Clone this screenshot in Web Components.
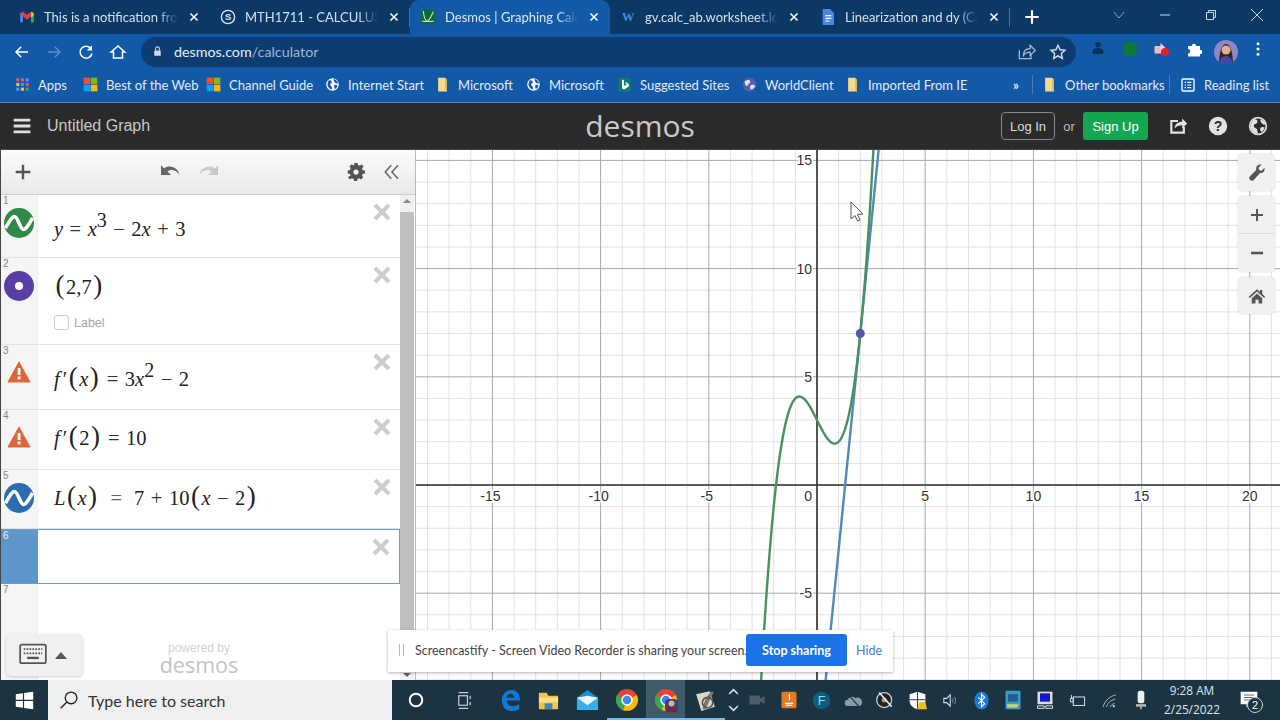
<!DOCTYPE html>
<html>
<head>
<meta charset="utf-8">
<title>Desmos</title>
<style>
  html, body { margin: 0; height: 100%; }
  body { width: 1280px; height: 720px; overflow: hidden; display: flex; flex-direction: column; font-family: "Liberation Sans", sans-serif; background: #fff; }
</style>
</head>
<body>
<chrome-tabs>
  <chrome-tab icon="gmail" style="width:202px;padding-left:11px">This is a notification from Gmail</chrome-tab>
  <chrome-tab icon="schoology" sep>MTH1711 - CALCULUS: 1 | Schoology</chrome-tab>
  <chrome-tab icon="desmos" active>Desmos | Graphing Calculator</chrome-tab>
  <chrome-tab icon="weebly">gv.calc_ab.worksheet.local</chrome-tab>
  <chrome-tab icon="docs" sep>Linearization and dy (Calc AB)</chrome-tab>
</chrome-tabs>
<chrome-toolbar></chrome-toolbar>
<bookmark-bar></bookmark-bar>
<desmos-header></desmos-header>
<calc-main>
  <expr-panel slot="panel">
    <expr-row n="1" kind="wave" color="#2f8a45" h="63"><math-line top="23"><i>y</i><u>=</u><i>x</i><sup>3</sup><u>−</u>2<i>x</i><u>+</u>3</math-line></expr-row>
    <expr-row n="2" kind="point" color="#5a3ea6" h="87" label><math-line top="18"><b>(</b>2,7<b>)</b></math-line></expr-row>
    <expr-row n="3" kind="warn" h="65"><math-line top="23"><i>f</i><em>′</em><b>(</b><i>x</i><b>)</b><u>=</u>3<i>x</i><sup>2</sup><u>−</u>2</math-line></expr-row>
    <expr-row n="4" kind="warn" h="60"><math-line top="17"><i>f</i><em>′</em><b>(</b>2<b>)</b><u>=</u>10</math-line></expr-row>
    <expr-row n="5" kind="wave" color="#2a6eb0" h="59"><math-line top="17"><i>L</i><b>(</b><i>x</i><b>)</b><u class="w">=</u>7<u>+</u>10<b>(</b><i>x</i><u>−</u>2<b>)</b></math-line></expr-row>
    <expr-row n="6" active h="55"></expr-row>
    <expr-row n="7" h="97" last></expr-row>
  </expr-panel>
  <graph-view slot="graph"></graph-view>
  <share-notice slot="notice"></share-notice>
</calc-main>
<win-taskbar></win-taskbar>

<script>
// every icon in one table, drawn on a 24 box unless it says otherwise
const ICONS = {
  gmail: '<path d="M2 6v14h4V11l6 5 6-5v9h4V6l-4-2-6 5-6-5z" fill="#ea4335"/><path d="M2 6v14h4V10z" fill="#4285f4"/><path d="M22 6v14h-4V10z" fill="#34a853"/><path d="M18 4l4 2v4l-4 3z" fill="#fbbc04"/>',
  schoology: '<circle cx="12" cy="12" r="10" fill="none" stroke="#dfe6ee" stroke-width="2"/><text x="12" y="17" font-size="14" font-weight="700" text-anchor="middle" font-family="Liberation Sans" fill="#dfe6ee">S</text>',
  desmos: '<rect x="1" y="1" width="22" height="22" rx="3" fill="#0d6b3a"/><path d="M5 3c1 10 3 15 6 15s6-8 9-14M3 18c4 1 14 1 18 0" fill="none" stroke="#cfe8cf" stroke-width="1.6"/>',
  weebly: '<text x="12" y="18" font-size="19" font-weight="700" text-anchor="middle" font-family="Liberation Serif" fill="#3f8fe0">W</text>',
  docs: '<path d="M4 0h11l6 6v18H4z" fill="#4a86e8"/><path d="M8 10h9M8 14h9M8 18h6" stroke="#fff" stroke-width="1.8"/>',
  close: '<path d="M6 6l12 12M18 6L6 18" stroke="currentColor" stroke-width="2.6" fill="none"/>',
  plus: '<path d="M12 4v16M4 12h16" stroke="currentColor" stroke-width="2.6" fill="none"/>',
  back: '<path d="M20 12H5M11 5l-7 7 7 7" stroke="currentColor" stroke-width="2" fill="none"/>',
  forward: '<path d="M4 12h15M13 5l7 7-7 7" stroke="currentColor" stroke-width="2" fill="none"/>',
  reload: '<path d="M19 8a8 8 0 1 0 1 6" stroke="currentColor" stroke-width="2" fill="none"/><path d="M20 3v7h-7z" fill="currentColor"/>',
  home: '<path d="M12 4L3 12h3v8h12v-8h3z" stroke="currentColor" stroke-width="2" fill="none"/>',
  lock: '<rect x="6" y="10" width="12" height="10" rx="1" fill="currentColor"/><path d="M8.5 10V7a3.5 3.5 0 0 1 7 0v3" stroke="currentColor" stroke-width="2" fill="none"/>',
  share: '<path d="M4 10v10h14v-5" stroke="currentColor" stroke-width="1.5" fill="none"/><path d="M9 16c0-6 4-8 8-8V4l6 6-6 6v-4c-4 0-6 1-8 4z" stroke="currentColor" stroke-width="1.5" fill="none"/>',
  star: '<path d="M12 3l2.8 6 6.5.7-4.9 4.4 1.4 6.4L12 17.2l-5.8 3.3 1.4-6.4L2.700 9.700 9.200 9z" stroke="currentColor" stroke-width="1.8" fill="none"/>',
  person: '<circle cx="12" cy="7" r="4" fill="#0b2f5c"/><path d="M4 21v-4c0-3 3-5 8-5s8 2 8 5v4z" fill="#0b2f5c"/>',
  greenext: '<rect x="3" y="3" width="18" height="18" rx="3" fill="#0e7a3a"/>',
  redext: '<path d="M2 8h12v10H2z" fill="#f4b8c2"/><path d="M10 4l8 8-8 6z" fill="#f4d6dc"/><circle cx="16" cy="16" r="5.500" fill="#e0202a"/>',
  puzzle: '<path d="M4 8h5a3 3 0 0 1 6 0h5v5a3 3 0 0 1 0 6v3H4v-4a3 3 0 0 0 0-6z" fill="#fff"/>',
  avatar: '<circle cx="12" cy="12" r="12" fill="#8e86c8"/><path d="M5 24c0-9 2-20 7-20s7 11 7 20z" fill="#3a2420"/><circle cx="12" cy="10" r="4.500" fill="#e0b090"/><path d="M5 24c1-6 4-8 7-8s6 2 7 8z" fill="#3b4ba8"/>',
  dots: '<circle cx="12" cy="5" r="2" fill="#fff"/><circle cx="12" cy="12" r="2" fill="#fff"/><circle cx="12" cy="19" r="2" fill="#fff"/>',
  apps: '<g fill="#e8a33d"><rect x="2" y="2" width="5" height="5" fill="#e85d4a"/><rect x="9.500" y="2" width="5" height="5" fill="#e85d4a"/><rect x="17" y="2" width="5" height="5" fill="#4a9cf0"/><rect x="2" y="9.500" width="5" height="5" fill="#f0c040"/><rect x="9.500" y="9.500" width="5" height="5" fill="#43a85a"/><rect x="17" y="9.500" width="5" height="5" fill="#e85d4a"/><rect x="2" y="17" width="5" height="5" fill="#4a9cf0"/><rect x="9.500" y="17" width="5" height="5" fill="#f0c040"/><rect x="17" y="17" width="5" height="5" fill="#43a85a"/></g>',
  ms: '<rect x="1" y="1" width="10.500" height="10.500" fill="#f25022"/><rect x="12.500" y="1" width="10.500" height="10.500" fill="#7fba00"/><rect x="1" y="12.500" width="10.500" height="10.500" fill="#00a4ef"/><rect x="12.500" y="12.500" width="10.500" height="10.500" fill="#ffb900"/>',
  globe: '<circle cx="12" cy="12" r="10" fill="#fff"/><path d="M6 5c3 0 5 1 5 3s-3 2-3 4 3 2 3 5 1 3 1 3c-3 0-7-3-8-7 0-3 1-6 2-8zM14 3c3 1 6 3 7 7-2 1-4 0-5-1s-3-4-2-6zM15 13c2-1 4 0 5 1-1 3-2 4-4 5-1-2-2-4-1-6z" fill="#1259a8"/>',
  folder: '<path d="M5 1h11l3 3v19H5z" fill="#f6d98a"/><path d="M16 1l3 3v19h-2z" fill="#d9b45c"/>',
  bing: '<rect x="2" y="1" width="20" height="22" rx="2" fill="#0e7a72"/><path d="M8 4l3 1v9l5-2-2-1-1-3 6 3v4l-8 5-3-2z" fill="#fff"/>',
  world: '<circle cx="12" cy="12" r="11" fill="#565fa8"/><path d="M4 8c3-4 8-4 9-1s-3 3-4 6-4 1-5-5zM14 13c3-1 6 0 7 1-1 4-4 6-6 6s-3-5-1-7z" fill="#dfe2f2"/>',
  reading: '<rect x="3" y="3" width="18" height="18" rx="1.500" stroke="#fff" stroke-width="2" fill="none"/><path d="M7 8h2M11 8h6M7 12h2M11 12h6M7 16h2M11 16h6" stroke="#fff" stroke-width="1.800"/>',
  menu: '<path d="M2 5h20M2 12h20M2 19h20" stroke="currentColor" stroke-width="3.400" fill="none"/>',
  boxshare: '<path d="M19 13v7H4V6h8" stroke="currentColor" stroke-width="2.600" fill="none"/><path d="M8 15c0-5 4-8 9-8V3l6 6-6 6v-4c-4 0-7 1-9 4z" fill="currentColor"/>',
  help: '<circle cx="12" cy="12" r="11" fill="currentColor"/><text x="12" y="18" font-size="17" font-weight="700" text-anchor="middle" font-family="Liberation Sans" fill="#2a2a2a">?</text>',
  earth: '<circle cx="12" cy="12" r="10" fill="none" stroke="currentColor" stroke-width="2"/><path d="M7 4c4 0 5 2 4 4s-4 1-4 4 4 2 4 5l1 4c-4 0-8-3-9-8 0-4 2-7 4-9zM15 4c3 1 5 3 6 6-2 1-3 0-4-1s-3-3-2-5zM15 14c2-1 4-1 5 0-1 2-2 4-4 5-1-1-2-3-1-5z" fill="currentColor"/>',
  undo: '<path d="M2 5v10h10l-3.500-3.500c3-2.500 8-2 12 3-1.500-7-10-10.500-15.500-6z" fill="currentColor"/>',
  redo: '<path d="M22 5v10H12l3.500-3.500c-3-2.500-8-2-12 3 1.500-7 10-10.500 15.500-6z" fill="currentColor"/>',
  gear: '<path d="M10 1h4l.6 3 2.200 1 2.600-1.600 2.800 2.800L20 8.800l.9 2.200 3 .6v4l-3 .6-.9 1.800 1.600 2.600-2.800 2.800-2.600-1.600-2.200.9-.6 3h-4l-.6-3-2.200-.9-2.600 1.600-2.800-2.800L4.800 18 4 16l-3-.6v-4l3-.6.9-2.200L3.300 6l2.800-2.800L8.700 4.800l.7-.8z" transform="translate(0 -1.500)" fill="currentColor"/><circle cx="12" cy="12" r="3.500" fill="#f2f2f2"/>',
  collapse: '<path d="M11 3l-8 9 8 9M20 3l-8 9 8 9" stroke="currentColor" stroke-width="2" fill="none"/>',
  wrench: '<path d="M22 5l-4 4-3-1-1-3 4-4c-4-1-8 2-7 7L2 17c-1 2 0 4 2 5 1 1 3 0 4-1l8-9c4 1 7-3 6-7z" fill="currentColor"/>',
  minus: '<path d="M4 12h16" stroke="currentColor" stroke-width="3.400" fill="none"/>',
  house: '<path d="M12 3L1 13l1.500 1.500L12 6l9.500 8.500L23 13l-4-3.600V4h-3v2.700z" fill="currentColor"/><path d="M5 15l7-6.500 7 6.500v7h-5v-5h-4v5H5z" fill="currentColor"/>',
  keyboard: '<rect x="1" y="3" width="22" height="16" rx="1.500" fill="#f2f2f2" stroke="#555" stroke-width="1.500"/><path d="M4 7h16M4 10.500h16" stroke="#555" stroke-width="1.500" stroke-dasharray="1.500 1"/><path d="M7 14.500h10" stroke="#555" stroke-width="2"/>',
  windows: '<path d="M1 4l9-1.300V11H1zM11.500 2.500L23 1v10H11.500zM1 12.500h9v8.800L1 20zM11.500 12.500H23V23l-11.500-1.600z" fill="#fff"/>',
  search: '<circle cx="14.500" cy="9.500" r="7" fill="none" stroke="#222" stroke-width="1.600"/><path d="M9.500 14.500L2 22" stroke="#222" stroke-width="1.600"/>',
  cortana: '<circle cx="12" cy="12" r="7.500" fill="none" stroke="#fff" stroke-width="2.400"/>',
  taskview: '<path d="M6 2h12M6 22h12" stroke="#ccd" stroke-width="1.500"/><rect x="6" y="6" width="11" height="12" fill="none" stroke="#ccd" stroke-width="1.500"/><path d="M20.500 6v4M20.500 14v4" stroke="#ccd" stroke-width="1.500"/>',
  edge: '<path d="M3 12C3 5 8 1 13 1c6 0 9 5 9 11H8c0 4 3 6 6 6 3 0 5-1 7-2v5c-2 1-4 2-8 2-6 0-10-5-10-11zM8 9h8c0-2-2-4-4-4S8 7 8 9z" fill="#1078d8"/>',
  explorer: '<path d="M2 4h8l2 3h10v14H2z" fill="#f2c24a"/><rect x="2" y="9" width="20" height="5" fill="#fce08a"/><rect x="8" y="15" width="8" height="6" fill="#3f86b8"/>',
  mail: '<path d="M1 9l11-8 11 8v13H1z" fill="#1491d8"/><path d="M1 9l11 8 11-8v13H1z" fill="#35b0ea"/><path d="M1 9l11 8 11-8-11-2z" fill="#e8f5fc"/>',
  chrome: '<circle cx="12" cy="12" r="11" fill="#ea4335"/><path d="M12 12L2 7a11 11 0 0 0 6 15z" fill="#34a853"/><path d="M12 12l-4 10a11 11 0 0 0 15-10c0-2-1-4-1-5z" fill="#fbbc04"/><circle cx="12" cy="12" r="5" fill="#4285f4" stroke="#fff" stroke-width="1.500"/>',
  chromeface: '<circle cx="12" cy="12" r="11" fill="#ea4335"/><path d="M12 12L2 7a11 11 0 0 0 6 15z" fill="#34a853"/><path d="M12 12l-4 10a11 11 0 0 0 15-10c0-2-1-4-1-5z" fill="#fbbc04"/><circle cx="12" cy="12" r="5" fill="#4285f4" stroke="#fff" stroke-width="1.500"/><rect x="11" y="11" width="13" height="13" rx="4" fill="#3b3f88"/><circle cx="17.500" cy="15.500" r="3" fill="#e0b090"/><path d="M12 24c1-3 3-5 5.500-5s4.500 2 5.500 5z" fill="#8a2030"/>',
  stickies: '<path d="M3 6l13-3 5 15-13 4z" fill="#dcd8c8"/><path d="M9 20c2-8 5-14 9-17l2 1c-3 5-5 10-8 17z" fill="#777"/><circle cx="14" cy="14" r="5" fill="none" stroke="#555" stroke-width="1.500"/>',
  chevup: '<path d="M5 16l7-7 7 7" stroke="#dde" stroke-width="2.400" fill="none"/>',
  chevdown: '<path d="M5 8l7 7 7-7" stroke="#dde" stroke-width="2.400" fill="none"/>',
  camera: '<rect x="2" y="6" width="14" height="12" fill="#4f5c63"/><path d="M16 10l6-3v10l-6-3z" fill="#4f5c63"/>',
  java: '<rect x="3" y="2" width="18" height="20" rx="2" fill="#e07b26"/><path d="M7 16h10M8 18.500h8M13 5c-3 3 2 4-1 7" stroke="#fff" stroke-width="1.400" fill="none"/>',
  fcircle: '<circle cx="12" cy="12" r="11" fill="#0c5f7c"/><text x="12" y="18" font-size="16" text-anchor="middle" font-family="Liberation Sans" fill="#9ad8f0">F</text>',
  cloudoff: '<path d="M5 19a4 4 0 0 1 0-8c1-4 7-5 9-2a5 5 0 0 1 6 10z" fill="#8b9ba3"/><path d="M5 4l15 17" stroke="#1c3340" stroke-width="1.500"/>',
  speaker: '<circle cx="11" cy="12" r="9" fill="#222" stroke="#ccc" stroke-width="1.500"/><circle cx="11" cy="12" r="3" fill="#999"/><path d="M5 3l15 17" stroke="#e8e8e8" stroke-width="2"/>',
  shield: '<path d="M12 1l10 3v8c0 6-5 10-10 11C7 22 2 18 2 12V4z" fill="#fff"/><path d="M12 1v22M2 11h20" stroke="#333" stroke-width="1.200"/><path d="M14 14h8l2 9H12z" fill="#e8c020"/>',
  volume: '<path d="M4 9h4l5-5v16l-5-5H4z" fill="none" stroke="#dde" stroke-width="1.500"/><path d="M16 9c1 2 1 4 0 6M19 7c2 3 2 7 0 10" stroke="#8a9aa2" stroke-width="1.300" fill="none"/>',
  bluetooth: '<ellipse cx="12" cy="12" rx="9" ry="11.500" fill="#1a78d8"/><path d="M8 8l8 8-4 4V4l4 4-8 8" stroke="#fff" stroke-width="1.500" fill="none"/>',
  appblue: '<rect x="3" y="1" width="18" height="22" rx="1" fill="#3a9cc8"/><path d="M6 5h12v9H6z" fill="#1d5f8c"/><path d="M5 17h14l-2 4H5z" fill="#c8d860"/>',
  monitor: '<rect x="3" y="2" width="18" height="15" fill="#ddd"/><rect x="6" y="4" width="12" height="10" fill="#1418c8"/><path d="M3 19h8v3H3zM13 19h8v3h-8z" fill="none" stroke="#ddd" stroke-width="1.200"/>',
  battery: '<rect x="6" y="7" width="16" height="12" fill="none" stroke="#dde" stroke-width="1.400"/><path d="M2 9h4v5H2zM3.500 4v5" stroke="#dde" stroke-width="1.400" fill="none"/>',
  wifi: '<path d="M3 21c2-8 9-15 18-17M8 21c1-5 5-9 12-11M13 21c1-2 3-4 6-5" stroke="#b8c4ca" stroke-width="1.300" fill="none"/><circle cx="18" cy="20" r="1.500" fill="#dde"/>',
  mic: '<rect x="8" y="1" width="8" height="15" rx="3" fill="#eee"/><path d="M6 17h12v3H6z" fill="#bbb"/><rect x="11" y="20" width="2" height="3" fill="#bbb"/>',
  notify: '<path d="M2 2h20v15h-9l-4 4v-4H2z" fill="#fff"/><path d="M6 6h12M6 9h12M6 12h8" stroke="#667" stroke-width="1.300"/>'
};

function icon(name, size, extra) {
  return `<svg width="${size}" height="${size}" viewBox="0 0 24 24" style="display:block;flex:none;${extra || ''}">${ICONS[name]}</svg>`;
}

class BaseEl extends HTMLElement {
  constructor() {
    super();
    this.attachShadow({ mode: 'open' });
  }
}

class ChromeTabs extends BaseEl {
  connectedCallback() {
    this.shadowRoot.innerHTML = `<style>
      :host { display: flex; height: 34px; flex: none; background: #0c3866; padding-left: 8px; color: #fff; align-items: stretch; }
      .new { width: 44px; display: flex; align-items: center; justify-content: center; margin-left: 0; }
      .win { margin-left: auto; display: flex; align-items: flex-start; padding-right: 0; }
      .win div { width: 46px; height: 30px; display: flex; align-items: center; justify-content: center; color: #cfd9e6; }
    </style>
    <slot></slot>
    <div class="new">${icon('plus', 20)}</div>
    <div class="win">
      <div><svg width="12" height="12" viewBox="0 0 12 12"><path d="M1 3l5 6 5-6" stroke="#8fa6c2" fill="none"/></svg></div>
      <div><svg width="12" height="12" viewBox="0 0 12 12"><path d="M1 6h10" stroke="#cfd9e6"/></svg></div>
      <div><svg width="12" height="12" viewBox="0 0 12 12"><path d="M1.500 3.500h7v7h-7zM3.500 3V1.500h7v7H9" stroke="#cfd9e6" fill="none"/></svg></div>
      <div><svg width="14" height="14" viewBox="0 0 14 14"><path d="M1 1l12 12M13 1L1 13" stroke="#cfd9e6" fill="none"/></svg></div>
    </div>`;
  }
}

class ChromeTab extends BaseEl {
  connectedCallback() {
    const active = this.hasAttribute('active');
    this.shadowRoot.innerHTML = `<style>
      :host { display: flex; width: 200px; align-items: center; box-sizing: border-box; padding: 0 9px 0 10px; gap: 9px; position: relative; font: 13px Lato, "Liberation Sans", sans-serif; color: ${active ? '#dbe8f6' : '#d6e0ec'}; background: ${active ? '#1259a8' : 'transparent'}; border-radius: ${active ? '9px 9px 0 0' : '0'}; height: 34px; }
      .t { flex: 1; min-width: 0; white-space: nowrap; overflow: hidden; -webkit-mask-image: linear-gradient(90deg, #000 85%, transparent); mask-image: linear-gradient(90deg, #000 85%, transparent); }
      .x { color: #fff; flex: none; }
      :host([sep])::after { content: ""; position: absolute; right: 0; top: 8px; height: 19px; width: 1px; background: #4c6f96; }
    </style>
    ${icon(this.getAttribute('icon'), 16)}
    <div class="t"><slot></slot></div>
    <div class="x">${icon('close', 14)}</div>`;
  }
}

class ChromeToolbar extends BaseEl {
  connectedCallback() {
    const nav = (n, c) => `<div class="b" style="color:${c}">${icon(n, 18)}</div>`;
    const ext = (n, s) => `<div class="e">${icon(n, s)}</div>`;
    this.shadowRoot.innerHTML = `<style>
      :host { display: flex; height: 35px; flex: none; background: #1259a8; align-items: center; padding-left: 6px; color: #fff; }
      .b { width: 32px; display: flex; justify-content: center; }
      .omni { width: 935px; margin-left: 7px; height: 30px; border-radius: 15px; background: #0d3c70; display: flex; align-items: center; box-sizing: border-box; padding-left: 10px; font: 14.300px Lato, "Liberation Sans", sans-serif; color: #9db6d2; }
      .omni b { font-weight: 400; color: #e6eef7; }
      .lock { color: #cfdbe8; margin-right: 10px; }
      .end { margin-left: auto; display: flex; gap: 13px; align-items: center; color: #a8bdd6; padding-right: 9px; }
      .e { width: 32px; display: flex; justify-content: center; }
      .exts { display: flex; margin-left: 6px; }
    </style>
    ${nav('back', '#fff')}${nav('forward', '#5d8ec6')}${nav('reload', '#fff')}${nav('home', '#fff')}
    <div class="omni">
      <span class="lock">${icon('lock', 13)}</span><span><b>desmos.com</b>/calculator</span>
      <div class="end">${icon('share', 20)}<span style="color:#dbe6f2">${icon('star', 18)}</span></div>
    </div>
    <div class="exts">${ext('person', 16)}${ext('greenext', 18)}${ext('redext', 18)}${ext('puzzle', 18)}${ext('avatar', 24)}${ext('dots', 18)}</div>`;
  }
}

class BookmarkBar extends BaseEl {
  connectedCallback() {
    const items = [
      ['apps', 'Apps', 68], ['ms', 'Best of the Web', 123], ['ms', 'Channel Guide', 119],
      ['globe', 'Internet Start', 110], ['folder', 'Microsoft', 91], ['globe', 'Microsoft', 91],
      ['bing', 'Suggested Sites', 125], ['world', 'WorldClient', 103], ['folder', 'Imported From IE', 163]
    ];
    const row = items.map(([i, t, w]) => `<div class="i" style="width:${w}px">${icon(i, 15)}<span>${t}</span></div>`).join('');
    this.shadowRoot.innerHTML = `<style>
      :host { display: flex; height: 34px; flex: none; background: #1259a8; border-bottom: 1px solid #5d86b4; box-sizing: border-box; align-items: center; padding: 0 0 2px 15px; font: 13px Lato, "Liberation Sans", sans-serif; color: #e3ebf5; }
      .i { display: flex; align-items: center; gap: 8px; white-space: nowrap; flex: none; box-sizing: border-box; }
      .more { width: 15px; font-size: 13px; font-weight: 700; margin-left: 5px; }
      .s { width: 1px; height: 19px; background: #4c7cb2; flex: none; margin: 0 9px 0 4px; }
    </style>
    ${row}
    <span class="more">»</span><span class="s"></span>
    <div class="i" style="width:127px">${icon('folder', 15)}<span>Other bookmarks</span></div>
    <span class="s" style="margin:0 10px 0 0"></span>
    <div class="i">${icon('reading', 16)}<span>Reading list</span></div>`;
  }
}

class DesmosHeader extends BaseEl {
  connectedCallback() {
    this.shadowRoot.innerHTML = `<style>
      :host { display: grid; grid-template-columns: 1fr auto 1fr; height: 47px; flex: none; background: #2a2a2a; align-items: center; color: #ddd; font-size: 16px; border-bottom: 1px solid #444; box-sizing: border-box; }
      .l { display: flex; align-items: center; padding-left: 12px; gap: 15px; }
      .title { color: #c8c8c8; }
      .logo { font: 400 30px "Open Sans", sans-serif; color: #c9c9c9; line-height: 46px; }
      .r { display: flex; align-items: center; justify-content: flex-end; font-size: 13px; }
      .login { border: 1px solid #888; border-radius: 4px; height: 26px; width: 52px; display: flex; align-items: center; justify-content: center; color: #ddd; }
      .or { width: 28px; text-align: center; color: #bbb; }
      .signup { background: #15a650; border-radius: 3px; height: 28px; width: 65px; display: flex; align-items: center; justify-content: center; color: #fff; }
      .ic { width: 40px; display: flex; justify-content: center; color: #e2e2e2; }
      .first { margin-left: 10px; }
    </style>
    <div class="l">${icon('menu', 20, 'color:#e0e0e0')}<span class="title">Untitled Graph</span></div>
    <div class="logo">desmos</div>
    <div class="r">
      <div class="login">Log In</div><span class="or">or</span><div class="signup">Sign Up</div>
      <div class="ic first">${icon('boxshare', 20)}</div><div class="ic">${icon('help', 20)}</div><div class="ic" style="margin-right:2px">${icon('earth', 20)}</div>
    </div>`;
  }
}

class CalcMain extends BaseEl {
  connectedCallback() {
    this.shadowRoot.innerHTML = `<style>
      :host { display: flex; flex: none; height: 530px; position: relative; overflow: hidden; }
      .notice { position: absolute; left: 388px; top: 480px; }
    </style>
    <slot name="panel"></slot><slot name="graph"></slot>
    <div class="notice"><slot name="notice"></slot></div>`;
  }
}

class ExprPanel extends BaseEl {
  connectedCallback() {
    this.shadowRoot.innerHTML = `<style>
      :host { display: flex; flex-direction: column; width: 416px; flex: none; height: 530px; box-sizing: border-box; border-left: 1px solid #444; border-right: 1px solid #bbb; background: #fff; position: relative; overflow: hidden; }
      .tools { height: 45px; flex: none; display: flex; align-items: center; background: linear-gradient(#fbfbfb, #e9e9e9); border-bottom: 1px solid #ccc; box-sizing: border-box; color: #555; }
      .add { margin-left: 11px; }
      .undo { margin-left: 125px; display: flex; gap: 13px; }
      .set { margin-left: 127px; }
      .col { margin-left: 18px; color: #666; }
      .body { flex: 1; display: flex; min-height: 0; }
      .list { width: 399px; flex: none; }
      .bar { width: 14px; margin-left: 0; background: #f1f1f1; display: flex; flex-direction: column; align-items: center; position: relative; }
      .bar i { display: block; width: 0; height: 0; border: 4px solid transparent; border-bottom: 4px solid #888; margin-top: 0; }
      .bar i.dn { position: absolute; bottom: 3px; border-bottom: 0; border-top: 4px solid #666; }
      .thumb { position: absolute; left: 0; right: 0; top: 17px; bottom: 13px; background: #bfbfbf; }
      .kbd { position: absolute; left: 5px; top: 484px; width: 77px; height: 42px; background: #f0f0f0; border-radius: 5px; box-shadow: 0 1px 3px rgba(0,0,0,.2); display: flex; align-items: center; padding-left: 13px; box-sizing: border-box; gap: 8px; }
      .kbd i { width: 0; height: 0; border: 6px solid transparent; border-bottom: 7px solid #555; border-top: 0; }
      .pow { position: absolute; left: 158px; top: 492px; width: 80px; text-align: center; color: #d2d2d2; font-size: 12px; line-height: 13px; }
      .pow div { font: 400 21.500px/19px "Open Sans", sans-serif; color: #c4c4c4; }
    </style>
    <div class="tools">
      <span class="add">${icon('plus', 22)}</span>
      <span class="undo"><span style="color:#666">${icon('undo', 24)}</span><span style="color:#c9c9c9">${icon('redo', 24)}</span></span>
      <span class="set">${icon('gear', 18)}</span>
      <span class="col">${icon('collapse', 18)}</span>
    </div>
    <div class="body">
      <div class="list"><slot></slot></div>
      <div class="bar"><i></i><div class="thumb"></div><i class="dn"></i></div>
    </div>
    <div class="kbd">${icon('keyboard', 28)}<i></i></div>
    <div class="pow">powered by<div>desmos</div></div>`;
  }
}

class ExprRow extends BaseEl {
  connectedCallback() {
    const kind = this.getAttribute('kind');
    const color = this.getAttribute('color') || '#000';
    let mark = '';
    if (kind === 'wave') {
      mark = `<svg width="30" height="30" viewBox="0 0 30 30"><circle cx="15" cy="15" r="15" fill="${color}"/><path d="M1.500 20C5 14 8 8.500 10.500 8.500c3.500 0 5.500 13 9 13C22 21.500 25 16 28.500 10" stroke="#fff" stroke-width="3.600" fill="none"/></svg>`;
    } else if (kind === 'point') {
      mark = `<svg width="30" height="30" viewBox="0 0 30 30"><circle cx="15" cy="15" r="15" fill="${color}"/><circle cx="15" cy="15" r="4" fill="#fff"/></svg>`;
    } else if (kind === 'warn') {
      mark = `<svg width="24" height="22" viewBox="0 0 24 22"><path d="M12 1L23 21H1z" fill="#e0663a" stroke="#e0663a" stroke-linejoin="round"/><rect x="10.700" y="7" width="2.800" height="7" fill="#fff"/><rect x="10.700" y="15.500" width="2.800" height="2.800" fill="#fff"/></svg>`;
    }
    const label = this.hasAttribute('label') ? `<div class="lab"><span class="box"></span>Label</div>` : '';
    this.shadowRoot.innerHTML = `<style>
      :host { display: flex; height: ${this.getAttribute('h')}px; box-sizing: border-box; position: relative; ${this.hasAttribute('last') ? '' : 'border-bottom: 1px solid #e2e2e2;'} }
      :host([active]) { border: 1px solid #6a9cc8; border-left: 0; }
      .gut { width: 37px; flex: none; background: #f5f5f5; border-right: 1px solid #eee; position: relative; display: flex; justify-content: center; padding-top: ${kind === 'warn' ? 16 : 13}px; box-sizing: border-box; }
      :host([active]) .gut { background: #5f97cc; border-right: 0; }
      .n { position: absolute; left: 2px; top: 0; font-size: 10px; color: #888; }
      :host([active]) .n { color: #e8f0f8; }
      .main { flex: 1; padding-left: 16px; display: flex; flex-direction: column; }
      .lab { display: flex; align-items: center; gap: 5px; font: 12.500px "Liberation Sans", sans-serif; color: #a8a8a8; margin-top: 15px; }
      .box { width: 15px; height: 15px; border: 1px solid #ccc; border-radius: 3px; box-sizing: border-box; display: block; }
      .x { position: absolute; right: 6px; top: 5px; width: 24px; height: 24px; color: #ccc; }
    </style>
    <div class="gut"><span class="n">${this.getAttribute('n')}</span>${mark}</div>
    <div class="main"><slot></slot>${label}</div>
    ${this.hasAttribute('last') ? '' : `<div class="x"><svg width="24" height="24" viewBox="0 0 24 24"><path d="M5 5l14 14M19 5L5 19" stroke="currentColor" stroke-width="4"/></svg></div>`}`;
  }
}

class MathLine extends BaseEl {
  connectedCallback() {
    this.shadowRoot.innerHTML = `<style>
      :host { display: flex; align-items: baseline; height: 42px; padding-top: ${this.getAttribute('top')}px; box-sizing: border-box; font: 20.500px "Liberation Serif", serif; color: #222; white-space: pre; }
      ::slotted(i) { font-style: italic; }
      ::slotted(em) { font-style: normal; margin-left: 3px; }
      ::slotted(u) { text-decoration: none; margin: 0 6.500px; color: #333; }
      ::slotted(u.w) { margin: 0 12px; color: #666; }
      ::slotted(sup) { font-size: 20px; position: relative; top: -9px; line-height: 0; vertical-align: baseline; }
      ::slotted(b) { font-weight: 400; font-size: 27px; line-height: 0; margin: 0 1.500px; }
    </style><slot></slot>`;
  }
}

class GraphView extends BaseEl {
  connectedCallback() {
    const W = 864, H = 530, ox = 401, oy = 335, u = 21.64;
    let minor = '', major = '', labels = '';
    for (let i = -18; i <= 22; i++) {
      const x = ox + i * u;
      if (x < 0 || x > W) continue;
      if (i % 5 === 0) major += `M${x.toFixed(1)} 0V${H}`;
      else minor += `M${x.toFixed(1)} 0V${H}`;
    }
    for (let i = -9; i <= 16; i++) {
      const y = oy - i * u;
      if (y < 0 || y > H) continue;
      if (i % 5 === 0) major += `M0 ${y.toFixed(1)}H${W}`;
      else minor += `M0 ${y.toFixed(1)}H${W}`;
    }
    const lab = (t, x, y, a) => `<text x="${x}" y="${y}" text-anchor="${a}" font-family="Liberation Sans" font-size="14" fill="#333" stroke="#fff" stroke-width="3" paint-order="stroke">${t}</text>`;
    [-15, -10, -5, 5, 10, 15, 20].forEach(n => {
      labels += lab(n < 0 ? '-' + -n : n, (ox + n * u - (n < 0 ? 2 : 0)).toFixed(1), oy + 16, 'middle');
    });
    labels += lab('0', ox - 5, oy + 16, 'end');
    [15, 10, 5, -5].forEach(n => {
      labels += lab(n < 0 ? '-' + -n : n, ox - 5, (oy - n * u + 5).toFixed(1), 'end');
    });
    let cubic = '';
    for (let x = -2.8; x <= 2.9; x += 0.02) {
      const y = x * x * x - 2 * x + 3;
      cubic += (cubic ? 'L' : 'M') + (ox + x * u).toFixed(2) + ' ' + (oy - y * u).toFixed(2);
    }
    const line = `M${(ox + -0.2 * u).toFixed(1)} ${(oy + 15 * u).toFixed(1)}L${(ox + 3 * u).toFixed(1)} ${(oy - 17 * u).toFixed(1)}`;
    const cx = ox + 2 * u, cy = oy - 7 * u;
    this.shadowRoot.innerHTML = `<style>
      :host { display: block; flex: 1; min-width: 0; position: relative; background: #fff; }
      svg.g { display: block; }
      .tools { position: absolute; right: 5px; top: 4px; display: flex; flex-direction: column; gap: 5px; width: 37px; color: #555; }
      .btn { background: #f0f0f0; border-radius: 5px; box-shadow: 0 0 2px rgba(0,0,0,.2); display: flex; flex-direction: column; }
      .btn div { height: 37px; display: flex; align-items: center; justify-content: center; }
      .btn div + div { border-top: 1px solid #ddd; height: 38px; }
    </style>
    <svg class="g" width="${W}" height="${H}" viewBox="0 0 ${W} ${H}">
      <path d="${minor}" stroke="#e2e2e2" stroke-width="1" fill="none"/>
      <path d="${major}" stroke="#a8a8a8" stroke-width="1" fill="none"/>
      <path d="M${ox} 0V${H}M0 ${oy}H${W}" stroke="#333" stroke-width="1.600" fill="none"/>
      ${labels}
      <path d="${line}" stroke="#4f8abb" stroke-width="2.400" fill="none"/>
      <path d="${cubic}" stroke="#4a9161" stroke-width="2.400" fill="none"/>
      <circle cx="${cx}" cy="${cy}" r="4.500" fill="#4f5aa8"/>
      <path d="M435 52v17l4-3.500 2.500 5.500 2.500-1-2.500-5.500 5.500-.5z" fill="#fff" stroke="#555" stroke-width="1"/>
    </svg>
    <div class="tools">
      <div class="btn"><div>${icon('wrench', 18)}</div></div>
      <div class="btn"><div>${icon('plus', 18)}</div><div>${icon('minus', 18)}</div></div>
      <div class="btn"><div>${icon('house', 18)}</div></div>
    </div>`;
  }
}

class ShareNotice extends BaseEl {
  connectedCallback() {
    this.shadowRoot.innerHTML = `<style>
      :host { display: flex; width: 505px; height: 42px; background: #fff; align-items: center; box-sizing: border-box; padding: 0 0 2px 11px; box-shadow: 0 1px 3px rgba(0,0,0,.3); font: 12.500px Lato, "Liberation Sans", sans-serif; color: #444; }
      .p { width: 5px; height: 12px; border-left: 1.500px solid #bbb; border-right: 1.500px solid #bbb; margin-right: 11px; box-sizing: border-box; flex: none; }
      .t { width: 331px; flex: none; white-space: nowrap; }
      .s { width: 101px; height: 32px; border-radius: 3px; background: #1a73e8; color: #fff; display: flex; align-items: center; justify-content: center; font-weight: 700; flex: none; }
      .h { flex: 1; text-align: center; color: #3f7fc8; padding-right: 2px; }
    </style>
    <span class="p"></span><span class="t">Screencastify - Screen Video Recorder is sharing your screen.</span>
    <span class="s">Stop sharing</span><span class="h">Hide</span>`;
  }
}

class WinTaskbar extends BaseEl {
  connectedCallback() {
    const cell = (n, w, s, cls) => `<div class="c ${cls || ''}" style="width:${w}px">${icon(n, s)}</div>`;
    const tray = [['camera', 18], ['java', 20], ['fcircle', 19], ['cloudoff', 19], ['speaker', 20], ['shield', 19], ['volume', 17], ['bluetooth', 19], ['appblue', 20], ['monitor', 20], ['battery', 17], ['wifi', 17], ['mic', 20]];
    this.shadowRoot.innerHTML = `<style>
      :host { display: flex; height: 40px; flex: none; background: #1c3442; align-items: stretch; color: #e6edf2; }
      .c { display: flex; align-items: center; justify-content: center; flex: none; box-sizing: border-box; position: relative; }
      .search { width: 344px; flex: none; background: #f0f0f0; display: flex; align-items: center; box-sizing: border-box; padding-left: 11px; gap: 9px; font: 16px Lato, "Liberation Sans", sans-serif; color: #333; }
      .u::after { content: ""; position: absolute; left: 0; right: 0; bottom: 0; height: 2px; background: #76b9ed; }
      .on { background: #3f5a68; }
      .sc { width: 16px; display: flex; flex-direction: column; align-items: center; justify-content: center; flex: none; gap: 2px; }
      .clock { width: 70px; flex: none; text-align: center; font: 11.800px/19px "Open Sans", "Liberation Sans", sans-serif; align-self: center; color: #dfe6ea; }
      .bell { width: 43px; flex: none; display: flex; align-items: center; justify-content: center; position: relative; }
      .badge { position: absolute; right: 7px; bottom: 7px; width: 14px; height: 14px; border-radius: 50%; background: #1c3442; border: 1px solid #ccc; font: 11px/14px "Liberation Sans", sans-serif; text-align: center; color: #fff; }
    </style>
    ${cell('windows', 48, 19)}
    <div class="search">${icon('search', 20)}<span>Type here to search</span></div>
    ${cell('cortana', 48, 20)}${cell('taskview', 47, 19)}
    <div style="width:4px;flex:none"></div>
    ${cell('edge', 38, 23)}${cell('explorer', 39, 23)}${cell('mail', 39, 23)}${cell('chrome', 39, 24, 'u')}${cell('chromeface', 39, 24, 'u on')}${cell('stickies', 40, 25, 'u')}
    <div class="sc">${icon('chevup', 15)}${icon('chevdown', 15)}</div>
    ${tray.map(([n, s]) => cell(n, 32, s)).join('')}
    <div class="clock">9:28 AM<br>2/25/2022</div>
    <div class="bell">${icon('notify', 20)}<span class="badge">2</span></div>`;
  }
}

customElements.define('chrome-tabs', ChromeTabs);
customElements.define('chrome-tab', ChromeTab);
customElements.define('chrome-toolbar', ChromeToolbar);
customElements.define('bookmark-bar', BookmarkBar);
customElements.define('desmos-header', DesmosHeader);
customElements.define('calc-main', CalcMain);
customElements.define('expr-panel', ExprPanel);
customElements.define('expr-row', ExprRow);
customElements.define('math-line', MathLine);
customElements.define('graph-view', GraphView);
customElements.define('share-notice', ShareNotice);
customElements.define('win-taskbar', WinTaskbar);
</script>
</body>
</html>
